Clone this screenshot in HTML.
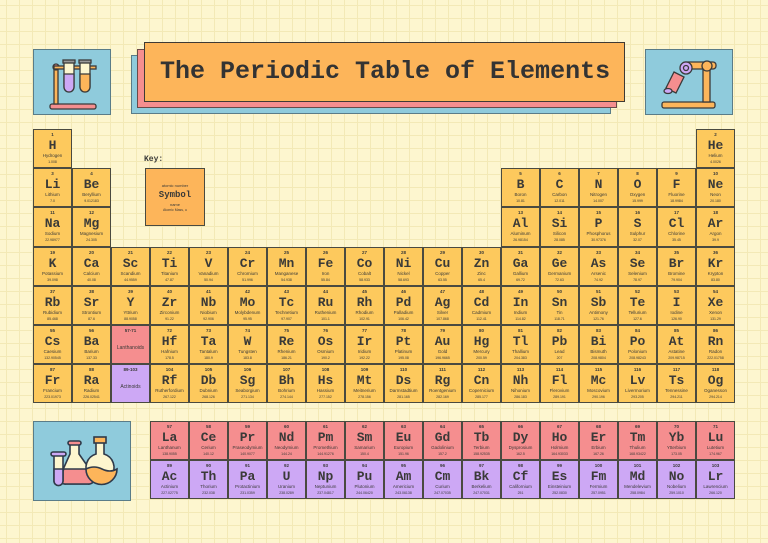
<!DOCTYPE html>
<html><head><meta charset="utf-8"><style>
*{margin:0;padding:0;box-sizing:border-box}
body{width:768px;height:543px;overflow:hidden;position:relative;background-color:#fdf6cf;
background-image:linear-gradient(#f3e9b6 1px,transparent 1px),linear-gradient(90deg,#f3e9b6 1px,transparent 1px);background-size:13px 13px;background-position:6px 5px;font-family:"Liberation Sans",sans-serif;color:#3a3a38}
.abs{position:absolute}
.g{position:absolute;display:grid;grid-template-columns:repeat(18,39px);grid-auto-rows:39.2px}
.g2{grid-template-columns:repeat(15,39px)}
.c{background:#fdc95d;border:1px solid #4a4a40;text-align:center;position:relative;overflow:hidden}
.c i{position:absolute;top:2px;left:0;right:0;font-style:normal;font-size:4.5px;font-weight:bold}
.c b{position:absolute;top:8px;left:0;right:0;font-family:"Liberation Mono",monospace;font-size:13px}
.c s{position:absolute;top:23px;left:0;right:0;text-decoration:none;font-size:4.5px;white-space:nowrap}
.c u{position:absolute;top:30px;left:0;right:0;text-decoration:none;font-size:3.5px}
.p{background:#f58e8f}.v{background:#cda8f5}
.c em{position:absolute;top:19px;left:0;right:0;font-style:normal;font-size:5px}
</style></head><body>
<div class="abs" style="left:131px;top:55px;width:480px;height:59px;background:#8fcbdc;border:1px solid #5a7c88"></div>
<div class="abs" style="left:137px;top:49px;width:480px;height:59px;background:#f58e8f;border:1px solid #6b4a48"></div>
<div class="abs" style="left:144px;top:42px;width:481px;height:60px;background:#fdb55a;border:1.5px solid #3f3a34;font-family:'Liberation Mono',monospace;font-weight:bold;font-size:25px;line-height:57px;padding-left:15px;color:#333;white-space:nowrap">The Periodic Table of Elements</div>
<div class="abs" style="left:33px;top:49px;width:78px;height:66px;background:#8fcbdc;border:1px solid #5a7c88">
<svg width="78" height="66" viewBox="0 0 78 66"><g stroke="#3a3a3a" stroke-width="1.3">
<rect x="16" y="54" width="46" height="5" rx="2" fill="#f58e8f"/>
<rect x="20" y="16" width="4" height="38" fill="#fdb55a"/>
<circle cx="22" cy="17" r="3" fill="#f58e8f"/>
<rect x="20" y="16" width="42" height="3" fill="#fdb55a"/>
<path d="M30 12h10v25a5 5 0 0 1-10 0z" fill="#fdf6cf"/><path d="M30 24h10v13a5 5 0 0 1-10 0z" fill="#cda8f5"/>
<path d="M46 12h10v25a5 5 0 0 1-10 0z" fill="#fdf6cf"/><path d="M46 24h10v13a5 5 0 0 1-10 0z" fill="#fdb55a"/>
<rect x="29" y="10" width="12" height="3" fill="#999"/><rect x="45" y="10" width="12" height="3" fill="#999"/></g></svg></div>
<div class="abs" style="left:645px;top:49px;width:88px;height:66px;background:#8fcbdc;border:1px solid #5a7c88">
<svg width="88" height="66" viewBox="0 0 88 66"><g stroke="#3a3a3a" stroke-width="1.3">
<rect x="16" y="52" width="53" height="6" rx="2" fill="#fdb55a"/>
<rect x="57" y="14" width="7" height="38" fill="#fdb55a"/>
<rect x="36" y="12" width="34" height="7" rx="3" fill="#fdb55a"/>
<circle cx="61" cy="16" r="5" fill="#fdb55a"/>
<path d="M28 22l10 5-8 16-10-5z" fill="#f58e8f"/>
<circle cx="40" cy="18" r="6" fill="#cda8f5"/><circle cx="40" cy="18" r="2.5" fill="#cda8f5"/>
<ellipse cx="22" cy="41" rx="4" ry="2.5" fill="#cda8f5"/></g></svg></div>
<div class="abs" style="left:33px;top:421px;width:98px;height:80px;background:#8fcbdc;border:1px solid #5a7c88">
<svg width="98" height="80" viewBox="0 0 98 80"><g stroke="#2f3a4a" stroke-width="1.6">
<path d="M36 22h9v10l14 20a6 6 0 0 1-5 10H32a6 6 0 0 1-5-10l9-20z" fill="#fdf6cf"/>
<path d="M30 47h26l3 5a6 6 0 0 1-5 10H32a6 6 0 0 1-5-10z" fill="#f58e8f"/>
<rect x="34" y="19" width="13" height="4" rx="2" fill="#f58e8f"/>
<path d="M20 33h9v26a4.5 4.5 0 0 1-9 0z" fill="#fdf6cf"/><path d="M20 47h9v12a4.5 4.5 0 0 1-9 0z" fill="#cda8f5"/>
<rect x="17" y="30" width="15" height="4" rx="2" fill="#cda8f5"/>
<path d="M62 20h8v12a14 14 0 1 1-8 0z" fill="#fdf6cf"/>
<path d="M52 47q8-4 16 0t15 0a14 14 0 0 1-31 0z" fill="#fdb55a"/>
<rect x="60" y="15" width="12" height="6" fill="#fdb55a"/></g></svg></div>
<div class="abs" style="left:144px;top:155px;font-family:'Liberation Mono',monospace;font-weight:bold;font-size:8px">Key:</div>
<div class="abs c" style="left:145px;top:168px;width:60px;height:58px;background:#fdb55a;border-width:1.3px">
<i style="top:14px;font-weight:normal;font-size:4px">atomic number</i><b style="top:21px;font-size:9px;font-weight:bold">Symbol</b><s style="top:33px;font-size:4px">name</s><u style="top:39px">Atomic Mass, u</u></div>
<div class="g" style="left:33px;top:129px">
<div class="c"><i>1</i><b>H</b><s>Hydrogen</s><u>1.008</u></div>
<div class="c" style="grid-column:18"><i>2</i><b>He</b><s>Helium</s><u>4.0026</u></div>
<div class="c"><i>3</i><b>Li</b><s>Lithium</s><u>7.0</u></div>
<div class="c"><i>4</i><b>Be</b><s>Beryllium</s><u>9.012183</u></div>
<div class="c" style="grid-column:13"><i>5</i><b>B</b><s>Boron</s><u>10.81</u></div>
<div class="c"><i>6</i><b>C</b><s>Carbon</s><u>12.011</u></div>
<div class="c"><i>7</i><b>N</b><s>Nitrogen</s><u>14.007</u></div>
<div class="c"><i>8</i><b>O</b><s>Oxygen</s><u>15.999</u></div>
<div class="c"><i>9</i><b>F</b><s>Fluorine</s><u>18.9984</u></div>
<div class="c"><i>10</i><b>Ne</b><s>Neon</s><u>20.180</u></div>
<div class="c"><i>11</i><b>Na</b><s>Sodium</s><u>22.98977</u></div>
<div class="c"><i>12</i><b>Mg</b><s>Magnesium</s><u>24.305</u></div>
<div class="c" style="grid-column:13"><i>13</i><b>Al</b><s>Aluminum</s><u>26.98154</u></div>
<div class="c"><i>14</i><b>Si</b><s>Silicon</s><u>28.085</u></div>
<div class="c"><i>15</i><b>P</b><s>Phosphorus</s><u>30.97376</u></div>
<div class="c"><i>16</i><b>S</b><s>Sulphur</s><u>32.07</u></div>
<div class="c"><i>17</i><b>Cl</b><s>Chlorine</s><u>35.45</u></div>
<div class="c"><i>18</i><b>Ar</b><s>Argon</s><u>39.9</u></div>
<div class="c"><i>19</i><b>K</b><s>Potassium</s><u>39.098</u></div>
<div class="c"><i>20</i><b>Ca</b><s>Calcium</s><u>40.08</u></div>
<div class="c"><i>21</i><b>Sc</b><s>Scandium</s><u>44.9559</u></div>
<div class="c"><i>22</i><b>Ti</b><s>Titanium</s><u>47.87</u></div>
<div class="c"><i>23</i><b>V</b><s>Vanadium</s><u>50.94</u></div>
<div class="c"><i>24</i><b>Cr</b><s>Chromium</s><u>51.996</u></div>
<div class="c"><i>25</i><b>Mn</b><s>Manganese</s><u>54.938</u></div>
<div class="c"><i>26</i><b>Fe</b><s>Iron</s><u>55.84</u></div>
<div class="c"><i>27</i><b>Co</b><s>Cobalt</s><u>58.933</u></div>
<div class="c"><i>28</i><b>Ni</b><s>Nickel</s><u>58.693</u></div>
<div class="c"><i>29</i><b>Cu</b><s>Copper</s><u>63.55</u></div>
<div class="c"><i>30</i><b>Zn</b><s>Zinc</s><u>65.4</u></div>
<div class="c"><i>31</i><b>Ga</b><s>Gallium</s><u>69.72</u></div>
<div class="c"><i>32</i><b>Ge</b><s>Germanium</s><u>72.63</u></div>
<div class="c"><i>33</i><b>As</b><s>Arsenic</s><u>74.92</u></div>
<div class="c"><i>34</i><b>Se</b><s>Selenium</s><u>78.97</u></div>
<div class="c"><i>35</i><b>Br</b><s>Bromine</s><u>79.904</u></div>
<div class="c"><i>36</i><b>Kr</b><s>Krypton</s><u>83.80</u></div>
<div class="c"><i>37</i><b>Rb</b><s>Rubidium</s><u>85.468</u></div>
<div class="c"><i>38</i><b>Sr</b><s>Strontium</s><u>87.6</u></div>
<div class="c"><i>39</i><b>Y</b><s>Yttrium</s><u>88.9058</u></div>
<div class="c"><i>40</i><b>Zr</b><s>Zirconium</s><u>91.22</u></div>
<div class="c"><i>41</i><b>Nb</b><s>Niobium</s><u>92.906</u></div>
<div class="c"><i>42</i><b>Mo</b><s>Molybdenum</s><u>95.95</u></div>
<div class="c"><i>43</i><b>Tc</b><s>Technetium</s><u>97.907</u></div>
<div class="c"><i>44</i><b>Ru</b><s>Ruthenium</s><u>101.1</u></div>
<div class="c"><i>45</i><b>Rh</b><s>Rhodium</s><u>102.91</u></div>
<div class="c"><i>46</i><b>Pd</b><s>Palladium</s><u>106.42</u></div>
<div class="c"><i>47</i><b>Ag</b><s>Silver</s><u>107.868</u></div>
<div class="c"><i>48</i><b>Cd</b><s>Cadmium</s><u>112.41</u></div>
<div class="c"><i>49</i><b>In</b><s>Indium</s><u>114.82</u></div>
<div class="c"><i>50</i><b>Sn</b><s>Tin</s><u>118.71</u></div>
<div class="c"><i>51</i><b>Sb</b><s>Antimony</s><u>121.76</u></div>
<div class="c"><i>52</i><b>Te</b><s>Tellurium</s><u>127.6</u></div>
<div class="c"><i>53</i><b>I</b><s>Iodine</s><u>126.90</u></div>
<div class="c"><i>54</i><b>Xe</b><s>Xenon</s><u>131.29</u></div>
<div class="c"><i>55</i><b>Cs</b><s>Caesium</s><u>132.90545</u></div>
<div class="c"><i>56</i><b>Ba</b><s>Barium</s><u>137.33</u></div>
<div class="c p"><i>57-71</i><em>Lanthanoids</em></div>
<div class="c"><i>72</i><b>Hf</b><s>Hafnium</s><u>178.5</u></div>
<div class="c"><i>73</i><b>Ta</b><s>Tantalum</s><u>180.9</u></div>
<div class="c"><i>74</i><b>W</b><s>Tungsten</s><u>183.8</u></div>
<div class="c"><i>75</i><b>Re</b><s>Rhenium</s><u>186.21</u></div>
<div class="c"><i>76</i><b>Os</b><s>Osmium</s><u>190.2</u></div>
<div class="c"><i>77</i><b>Ir</b><s>Iridium</s><u>192.22</u></div>
<div class="c"><i>78</i><b>Pt</b><s>Platinum</s><u>195.08</u></div>
<div class="c"><i>79</i><b>Au</b><s>Gold</s><u>196.9665</u></div>
<div class="c"><i>80</i><b>Hg</b><s>Mercury</s><u>200.59</u></div>
<div class="c"><i>81</i><b>Tl</b><s>Thallium</s><u>204.383</u></div>
<div class="c"><i>82</i><b>Pb</b><s>Lead</s><u>207</u></div>
<div class="c"><i>83</i><b>Bi</b><s>Bismuth</s><u>208.9804</u></div>
<div class="c"><i>84</i><b>Po</b><s>Polonium</s><u>208.98243</u></div>
<div class="c"><i>85</i><b>At</b><s>Astatine</s><u>209.98715</u></div>
<div class="c"><i>86</i><b>Rn</b><s>Radon</s><u>222.01758</u></div>
<div class="c"><i>87</i><b>Fr</b><s>Francium</s><u>223.01973</u></div>
<div class="c"><i>88</i><b>Ra</b><s>Radium</s><u>226.02541</u></div>
<div class="c v"><i>89-103</i><em>Actinoids</em></div>
<div class="c"><i>104</i><b>Rf</b><s>Rutherfordium</s><u>267.122</u></div>
<div class="c"><i>105</i><b>Db</b><s>Dubnium</s><u>268.126</u></div>
<div class="c"><i>106</i><b>Sg</b><s>Seaborgium</s><u>271.134</u></div>
<div class="c"><i>107</i><b>Bh</b><s>Bohrium</s><u>274.144</u></div>
<div class="c"><i>108</i><b>Hs</b><s>Hassium</s><u>277.152</u></div>
<div class="c"><i>109</i><b>Mt</b><s>Meitnerium</s><u>278.156</u></div>
<div class="c"><i>110</i><b>Ds</b><s>Darmstadtium</s><u>281.165</u></div>
<div class="c"><i>111</i><b>Rg</b><s>Roentgenium</s><u>282.169</u></div>
<div class="c"><i>112</i><b>Cn</b><s>Copernicium</s><u>285.177</u></div>
<div class="c"><i>113</i><b>Nh</b><s>Nihonium</s><u>286.183</u></div>
<div class="c"><i>114</i><b>Fl</b><s>Flerovium</s><u>289.191</u></div>
<div class="c"><i>115</i><b>Mc</b><s>Moscovium</s><u>290.196</u></div>
<div class="c"><i>116</i><b>Lv</b><s>Livermorium</s><u>293.205</u></div>
<div class="c"><i>117</i><b>Ts</b><s>Tennessine</s><u>294.211</u></div>
<div class="c"><i>118</i><b>Og</b><s>Oganesson</s><u>294.214</u></div>
</div>
<div class="g g2" style="left:150px;top:421px">
<div class="c p"><i>57</i><b>La</b><s>Lanthanum</s><u>138.9055</u></div>
<div class="c p"><i>58</i><b>Ce</b><s>Cerium</s><u>140.12</u></div>
<div class="c p"><i>59</i><b>Pr</b><s>Praseodymium</s><u>140.9077</u></div>
<div class="c p"><i>60</i><b>Nd</b><s>Neodymium</s><u>144.24</u></div>
<div class="c p"><i>61</i><b>Pm</b><s>Promethium</s><u>144.91276</u></div>
<div class="c p"><i>62</i><b>Sm</b><s>Samarium</s><u>150.4</u></div>
<div class="c p"><i>63</i><b>Eu</b><s>Europium</s><u>151.96</u></div>
<div class="c p"><i>64</i><b>Gd</b><s>Gadolinium</s><u>157.2</u></div>
<div class="c p"><i>65</i><b>Tb</b><s>Terbium</s><u>158.92535</u></div>
<div class="c p"><i>66</i><b>Dy</b><s>Dysprosium</s><u>162.5</u></div>
<div class="c p"><i>67</i><b>Ho</b><s>Holmium</s><u>164.93033</u></div>
<div class="c p"><i>68</i><b>Er</b><s>Erbium</s><u>167.26</u></div>
<div class="c p"><i>69</i><b>Tm</b><s>Thulium</s><u>168.93422</u></div>
<div class="c p"><i>70</i><b>Yb</b><s>Ytterbium</s><u>173.05</u></div>
<div class="c p"><i>71</i><b>Lu</b><s>Lutetium</s><u>174.967</u></div>
<div class="c v"><i>89</i><b>Ac</b><s>Actinium</s><u>227.02775</u></div>
<div class="c v"><i>90</i><b>Th</b><s>Thorium</s><u>232.038</u></div>
<div class="c v"><i>91</i><b>Pa</b><s>Protactinium</s><u>231.0359</u></div>
<div class="c v"><i>92</i><b>U</b><s>Uranium</s><u>238.0289</u></div>
<div class="c v"><i>93</i><b>Np</b><s>Neptunium</s><u>237.04817</u></div>
<div class="c v"><i>94</i><b>Pu</b><s>Plutonium</s><u>244.06420</u></div>
<div class="c v"><i>95</i><b>Am</b><s>Americium</s><u>243.06138</u></div>
<div class="c v"><i>96</i><b>Cm</b><s>Curium</s><u>247.07035</u></div>
<div class="c v"><i>97</i><b>Bk</b><s>Berkelium</s><u>247.07031</u></div>
<div class="c v"><i>98</i><b>Cf</b><s>Californium</s><u>251</u></div>
<div class="c v"><i>99</i><b>Es</b><s>Einsteinium</s><u>252.0830</u></div>
<div class="c v"><i>100</i><b>Fm</b><s>Fermium</s><u>257.0951</u></div>
<div class="c v"><i>101</i><b>Md</b><s>Mendelevium</s><u>258.0984</u></div>
<div class="c v"><i>102</i><b>No</b><s>Nobelium</s><u>259.1010</u></div>
<div class="c v"><i>103</i><b>Lr</b><s>Lawrencium</s><u>266.120</u></div>
</div>
</body></html>
